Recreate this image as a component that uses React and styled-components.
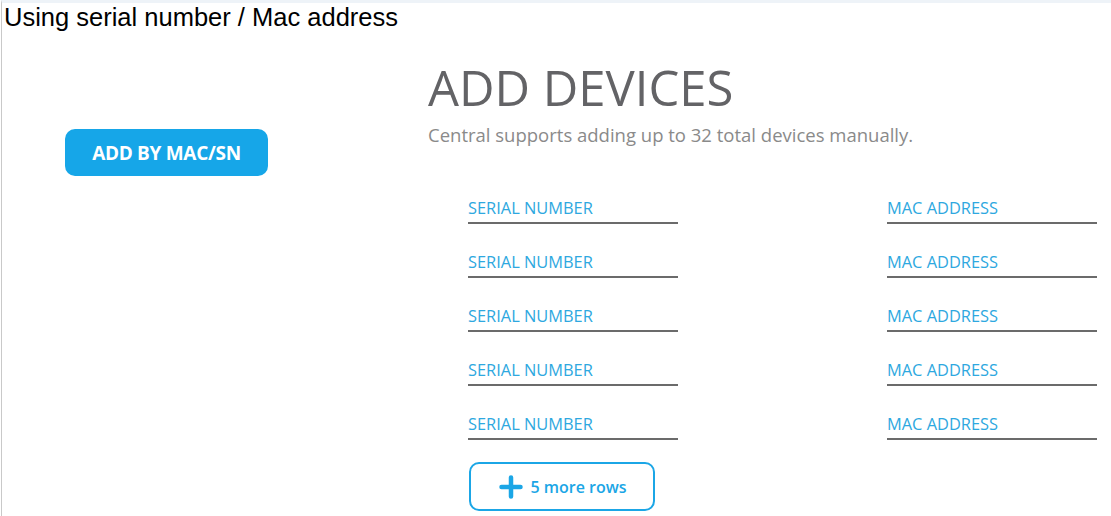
import React from 'react'
import styled, { createGlobalStyle } from 'styled-components'

const GlobalStyle = createGlobalStyle`
  html, body {
    margin: 0;
    padding: 0;
    background: #fff;
  }
`

const rows = [1, 2, 3, 4, 5]

const App = () => {
  return (
    <>
      <GlobalStyle />
      <Page>
        <Caption>Using serial number / Mac address</Caption>
        <Layout>
          <Side>
            <PrimaryButton>ADD BY MAC/SN</PrimaryButton>
          </Side>
          <Main>
            <Heading>ADD DEVICES</Heading>
            <Subtitle>Central supports adding up to 32 total devices manually.</Subtitle>
            <Fields>
              {rows.map((r) => (
                <React.Fragment key={r}>
                  <Field>SERIAL NUMBER</Field>
                  <Field>MAC ADDRESS</Field>
                </React.Fragment>
              ))}
            </Fields>
            <MoreButton>
              <svg width="24" height="24" viewBox="0 0 24 24">
                <path d="M12 2.5v19M2.5 12h19" stroke="#1ba6e6" strokeWidth="4.5" strokeLinecap="round" fill="none" />
              </svg>
              5 more rows
            </MoreButton>
          </Main>
        </Layout>
      </Page>
    </>
  )
}

const Page = styled.div`
  height: 513px;
  margin-left: 1px;
  border-top: 3px solid #eef3f8;
  border-left: 1px solid #c9c9c9;
  overflow: hidden;
`

const Caption = styled.div`
  padding-left: 2px;
  font-family: "Liberation Sans", Arial, sans-serif;
  font-size: 25.5px;
  line-height: 28px;
  color: #000;
`

const Layout = styled.div`
  display: flex;
  margin-top: 26px;
  font-family: "Open Sans", sans-serif;
`

const Side = styled.div`
  width: 426px;
  padding-left: 63px;
  padding-top: 72px;
  box-sizing: border-box;
`

const PrimaryButton = styled.button`
  width: 203px;
  height: 47px;
  border: none;
  border-radius: 10px;
  background: #16a6e8;
  color: #fff;
  font-family: "Open Sans", sans-serif;
  font-weight: 700;
  font-size: 19px;
  letter-spacing: -0.3px;
  padding: 0;
`

const Main = styled.div`
  display: flex;
  flex-direction: column;
  align-items: flex-start;
`

const Heading = styled.h1`
  margin: 0;
  font-size: 49px;
  line-height: 60px;
  font-weight: 400;
  color: #636366;
`

const Subtitle = styled.p`
  margin: 6px 0 0;
  font-size: 18.5px;
  line-height: 24px;
  color: #8a8a8a;
`

const Fields = styled.div`
  display: grid;
  grid-template-columns: 210px 210px;
  column-gap: 209px;
  row-gap: 28px;
  margin: 51px 0 0 40px;
`

const Field = styled.div`
  font-size: 16.4px;
  line-height: 20px;
  color: #2ea8e0;
  padding-bottom: 4px;
  border-bottom: 2px solid #6b6b6b;
`

const MoreButton = styled.button`
  display: flex;
  align-items: center;
  justify-content: center;
  gap: 7px;
  width: 186px;
  height: 49px;
  margin: 22px 0 0 41px;
  border: 2px solid #1ba6e6;
  border-radius: 10px;
  background: #fff;
  color: #1ba6e6;
  font-family: "Open Sans", sans-serif;
  font-weight: 600;
  font-size: 16px;
  padding: 0 0 0 2px;
  svg {
    flex: none;
  }
`

export default App
